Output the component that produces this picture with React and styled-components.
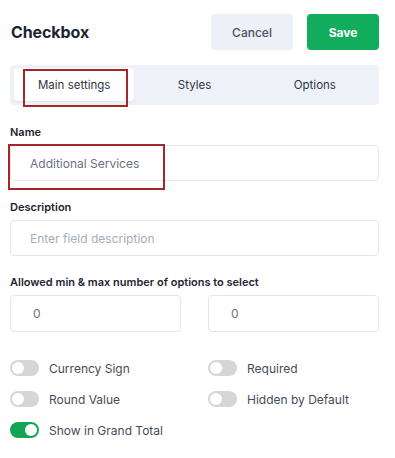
import React from "react";
import styled, { createGlobalStyle } from "styled-components";

const Global = createGlobalStyle`
  html, body { margin: 0; padding: 0; background: #ffffff; }
  body { font-family: Inter, "Noto Sans", sans-serif; }
  * { box-sizing: border-box; }
`;

const Page = styled.div`
  position: relative;
  width: 395px;
  height: 458px;
  padding: 14px 16px 0 10px;
  display: flex;
  flex-direction: column;
`;

const Header = styled.div`
  display: flex;
  align-items: center;
  height: 36px;
`;

const Title = styled.h1`
  margin: 0 0 0 1px;
  flex: 1;
  font-size: 16px;
  font-weight: 700;
  color: #1c2333;
  letter-spacing: -0.1px;
`;

const Button = styled.button`
  height: 36px;
  border: none;
  border-radius: 4px;
  font-family: inherit;
  font-size: 12px;
  font-weight: ${(p) => (p.$primary ? 700 : 500)};
  background: ${(p) => (p.$primary ? "#12ad5c" : "#edf0f7")};
  color: ${(p) => (p.$primary ? "#ffffff" : "#4b5261")};
  width: ${(p) => p.$w}px;
  margin-left: ${(p) => p.$ml}px;
  padding: 0;
`;

const Tabs = styled.div`
  margin-top: 15px;
  height: 40px;
  background: #eef1f8;
  border-radius: 4px;
  padding: 3px 4px 4px;
  display: grid;
  grid-template-columns: repeat(3, 1fr);
`;

const Tab = styled.div`
  display: flex;
  align-items: center;
  justify-content: center;
  border-radius: 4px;
  font-size: 11.5px;
  color: #2f3545;
  background: ${(p) => (p.$active ? "#ffffff" : "transparent")};
  box-shadow: ${(p) => (p.$active ? "0 1px 2px rgba(0,0,0,0.06)" : "none")};
`;

const Label = styled.div`
  font-size: 11px;
  font-weight: 600;
  color: #1f2533;
  margin-top: ${(p) => p.$mt}px;
  height: 14px;
  line-height: 14px;
`;

const Input = styled.div`
  margin-top: ${(p) => p.$mt || 7}px;
  height: ${(p) => p.$h || 36}px;
  border: 1px solid #e3e6ec;
  border-radius: 4px;
  display: flex;
  align-items: center;
  padding-left: ${(p) => p.$pl || 19}px;
  font-size: 12px;
  color: ${(p) => (p.$placeholder ? "#a6adba" : "#6b7280")};
`;

const Pair = styled.div`
  display: grid;
  grid-template-columns: 1fr 1fr;
  column-gap: 27px;
`;

const Toggles = styled.div`
  margin-top: 28px;
  display: grid;
  grid-template-columns: 1fr 1fr;
  column-gap: 27px;
  row-gap: 15px;
`;

const ToggleRow = styled.div`
  display: flex;
  align-items: center;
  height: 16px;
  gap: 10px;
  font-size: 12px;
  color: #454b59;
`;

const Switch = styled.span`
  position: relative;
  width: 29px;
  height: 16px;
  border-radius: 8px;
  background: ${(p) => (p.$on ? "#14a455" : "#d6d6d6")};
  flex-shrink: 0;
  &::after {
    content: "";
    position: absolute;
    top: 2px;
    left: ${(p) => (p.$on ? "15px" : "2px")};
    width: 12px;
    height: 12px;
    border-radius: 50%;
    background: #ffffff;
  }
`;

const Highlight = styled.div`
  position: absolute;
  border: 2px solid #a3262a;
  left: ${(p) => p.$x}px;
  top: ${(p) => p.$y}px;
  width: ${(p) => p.$w}px;
  height: ${(p) => p.$h}px;
  pointer-events: none;
`;

function Toggle({ on, children }) {
  return (
    <ToggleRow>
      <Switch $on={on} />
      {children}
    </ToggleRow>
  );
}

export default function App() {
  return (
    <>
      <Global />
      <Page>
        <Header>
          <Title>Checkbox</Title>
          <Button $w={82}>Cancel</Button>
          <Button $primary $w={72} $ml={14}>Save</Button>
        </Header>
        <Tabs>
          <Tab $active>Main settings</Tab>
          <Tab>Styles</Tab>
          <Tab>Options</Tab>
        </Tabs>
        <Label $mt={20}>Name</Label>
        <Input $mt={6}>Additional Services</Input>
        <Label $mt={19}>Description</Label>
        <Input $mt={6} $placeholder>Enter field description</Input>
        <Label $mt={19}>Allowed min &amp; max number of options to select</Label>
        <Pair>
          <Input $mt={6} $h={37} $pl={22}>0</Input>
          <Input $mt={6} $h={37} $pl={22}>0</Input>
        </Pair>
        <Toggles>
          <Toggle>Currency Sign</Toggle>
          <Toggle>Required</Toggle>
          <Toggle>Round Value</Toggle>
          <Toggle>Hidden by Default</Toggle>
          <Toggle on>Show in Grand Total</Toggle>
        </Toggles>
        <Highlight $x={23} $y={69} $w={105} $h={38} />
        <Highlight $x={8} $y={144} $w={157} $h={46} />
      </Page>
    </>
  );
}
